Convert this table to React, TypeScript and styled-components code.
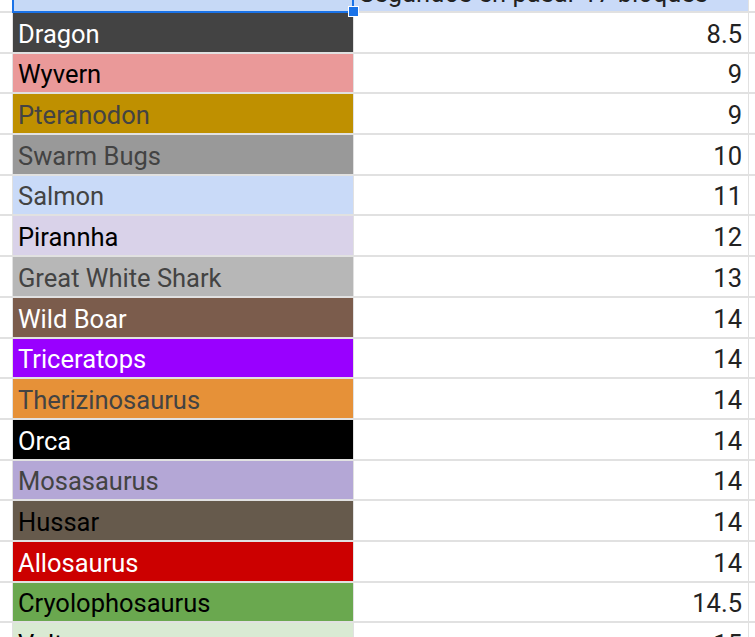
import styled, { createGlobalStyle } from 'styled-components';

const GlobalStyle = createGlobalStyle`
  html, body {
    margin: 0;
    padding: 0;
    background: #ffffff;
    overflow: hidden;
  }
  body {
    font-family: Roboto, "Liberation Sans", Arial, sans-serif;
  }
`;

type Animal = {
  name: string;
  time: string;
  bg: string;
  fg: string;
};

const animals: Animal[] = [
  { name: 'Dragon', time: '8.5', bg: '#434343', fg: '#ffffff' },
  { name: 'Wyvern', time: '9', bg: '#ea9999', fg: '#000000' },
  { name: 'Pteranodon', time: '9', bg: '#bf9000', fg: '#434343' },
  { name: 'Swarm Bugs', time: '10', bg: '#999999', fg: '#434343' },
  { name: 'Salmon', time: '11', bg: '#c9daf8', fg: '#434343' },
  { name: 'Pirannha', time: '12', bg: '#d9d2e9', fg: '#000000' },
  { name: 'Great White Shark', time: '13', bg: '#b7b7b7', fg: '#434343' },
  { name: 'Wild Boar', time: '14', bg: '#7b5c4c', fg: '#ffffff' },
  { name: 'Triceratops', time: '14', bg: '#9900ff', fg: '#ffffff' },
  { name: 'Therizinosaurus', time: '14', bg: '#e69138', fg: '#434343' },
  { name: 'Orca', time: '14', bg: '#000000', fg: '#ffffff' },
  { name: 'Mosasaurus', time: '14', bg: '#b4a7d6', fg: '#434343' },
  { name: 'Hussar', time: '14', bg: '#665a4c', fg: '#000000' },
  { name: 'Allosaurus', time: '14', bg: '#cc0000', fg: '#ffffff' },
  { name: 'Cryolophosaurus', time: '14.5', bg: '#6aa84f', fg: '#000000' },
  { name: 'Vulture', time: '15', bg: '#d9ead3', fg: '#000000' },
];

const Sheet = styled.div`
  margin-top: -27.7px;
  display: flex;
  flex-direction: column;
`;

const Row = styled.div`
  display: grid;
  grid-template-columns: 13px 341px 395px 1fr;
  height: 40.7px;
`;

const Cell = styled.div<{ $bg?: string; $fg?: string; $right?: boolean }>`
  position: relative;
  box-sizing: border-box;
  display: flex;
  align-items: flex-end;
  justify-content: ${(p) => (p.$right ? 'flex-end' : 'flex-start')};
  padding: 0 6px 3px 5px;
  background: ${(p) => p.$bg ?? '#ffffff'};
  color: ${(p) => p.$fg ?? '#222222'};
  border-right: 1px solid #e1e1e1;
  border-bottom: 2px solid #e1e1e1;
  font-size: 25.5px;
  line-height: 30px;
  white-space: nowrap;
  overflow: hidden;
`;

const HeaderCell = styled(Cell)`
  overflow: visible;
  z-index: 1;
`;

const Selection = styled.div`
  position: absolute;
  inset: 0 -1px -2px -1px;
  border: 2px solid #1a73e8;
  pointer-events: none;
`;

const FillHandle = styled.span`
  position: absolute;
  right: -7px;
  bottom: -6px;
  width: 9px;
  height: 9px;
  background: #1a73e8;
  border: 1px solid #ffffff;
  z-index: 2;
`;

export default function App() {
  return (
    <>
      <GlobalStyle />
      <Sheet>
        <Row>
          <Cell />
          <HeaderCell $bg="#c6d9f6">
            <Selection>
              <FillHandle />
            </Selection>
          </HeaderCell>
          <Cell $bg="#c9daf8" $fg="#222222">
            Segundos en pasar 17 bloques
          </Cell>
          <Cell />
        </Row>
        {animals.map((a) => (
          <Row key={a.name}>
            <Cell />
            <Cell $bg={a.bg} $fg={a.fg}>
              {a.name}
            </Cell>
            <Cell $right>{a.time}</Cell>
            <Cell />
          </Row>
        ))}
      </Sheet>
    </>
  );
}
